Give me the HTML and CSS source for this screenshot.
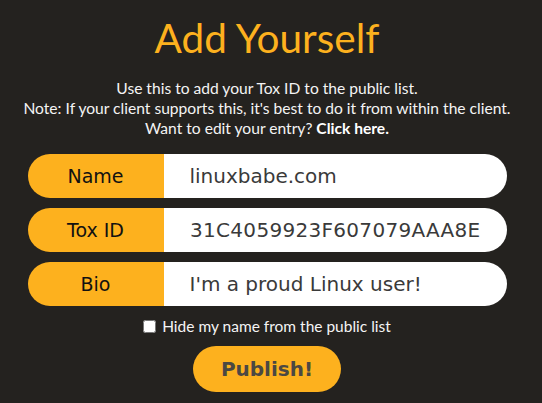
FILE: index.html
```html
<!DOCTYPE html>
<html>
<head>
<meta charset="utf-8">
<link rel="stylesheet" href="styles.css">
</head>
<body>
<div class="page">
  <h1 class="title">Add Yourself</h1>
  <p class="intro">Use this to add your Tox ID to the public list.<br>Note: If your client supports this, it's best to do it from within the client.<br>Want to edit your entry? <a class="link" href="#">Click here.</a></p>
  <form class="form">
    <div class="row">
      <div class="label">Name</div>
      <div class="field"><div class="clip"><span class="value">linuxbabe.com</span></div></div>
    </div>
    <div class="row">
      <div class="label">Tox ID</div>
      <div class="field"><div class="clip clip-end"><span class="value value-id">31C4059923F607079AAA8E</span></div></div>
    </div>
    <div class="row">
      <div class="label">Bio</div>
      <div class="field"><div class="clip"><span class="value">I'm a proud Linux user!</span></div></div>
    </div>
    <label class="check"><input type="checkbox" class="box"> Hide my name from the public list</label>
    <button type="button" class="publish">Publish!</button>
  </form>
</div>
</body>
</html>
```
FILE: styles.css
```css
html, body {
  margin: 0;
  padding: 0;
  background: #24221f;
}
.page {
  width: 534px;
  display: flex;
  flex-direction: column;
  align-items: center;
  font-family: Lato, "Liberation Sans", sans-serif;
}
.title {
  margin: 13px 0 0;
  font-family: Lato, sans-serif;
  font-weight: 400;
  font-size: 40.5px;
  line-height: 49px;
  color: #fdb11e;
}
.intro {
  margin: 16px 0 0;
  font-size: 15.6px;
  line-height: 20px;
  color: #f4f4f4;
  text-align: center;
}
.link {
  color: #ffffff;
  font-weight: 700;
  text-decoration: none;
}
.form {
  margin: 16px 0 0;
  display: flex;
  flex-direction: column;
  align-items: center;
  gap: 10px;
}
.row {
  width: 479px;
  height: 44px;
  display: flex;
  font-family: "DejaVu Sans", sans-serif;
}
.label {
  width: 136px;
  flex: none;
  background: #fdb11e;
  border-radius: 22px 0 0 22px;
  display: flex;
  align-items: center;
  justify-content: center;
  font-size: 19px;
  color: #111;
}
.field {
  flex: 1;
  min-width: 0;
  background: #fff;
  border-radius: 0 22px 22px 0;
  display: flex;
  align-items: center;
  padding: 0 26px;
  font-size: 20px;
  color: #3a3a3a;
}
.clip {
  flex: 1;
  min-width: 0;
  display: flex;
  overflow: hidden;
  white-space: nowrap;
}
.clip-end {
  justify-content: flex-end;
}
.value {
  flex: none;
}
.value-id {
  letter-spacing: 0.3px;
}
.check {
  margin-top: 0;
  display: flex;
  align-items: center;
  gap: 6px;
  font-family: Lato, sans-serif;
  font-size: 15.5px;
  line-height: 20px;
  color: #f4f4f4;
}
.box {
  margin: 0;
  width: 13px;
  height: 13px;
}
.publish {
  width: 148px;
  height: 46px;
  border: none;
  border-radius: 23px;
  background: #fdb11e;
  font-family: "DejaVu Sans", sans-serif;
  font-weight: 700;
  font-size: 20px;
  color: #4b4843;
  padding: 0;
}
```
